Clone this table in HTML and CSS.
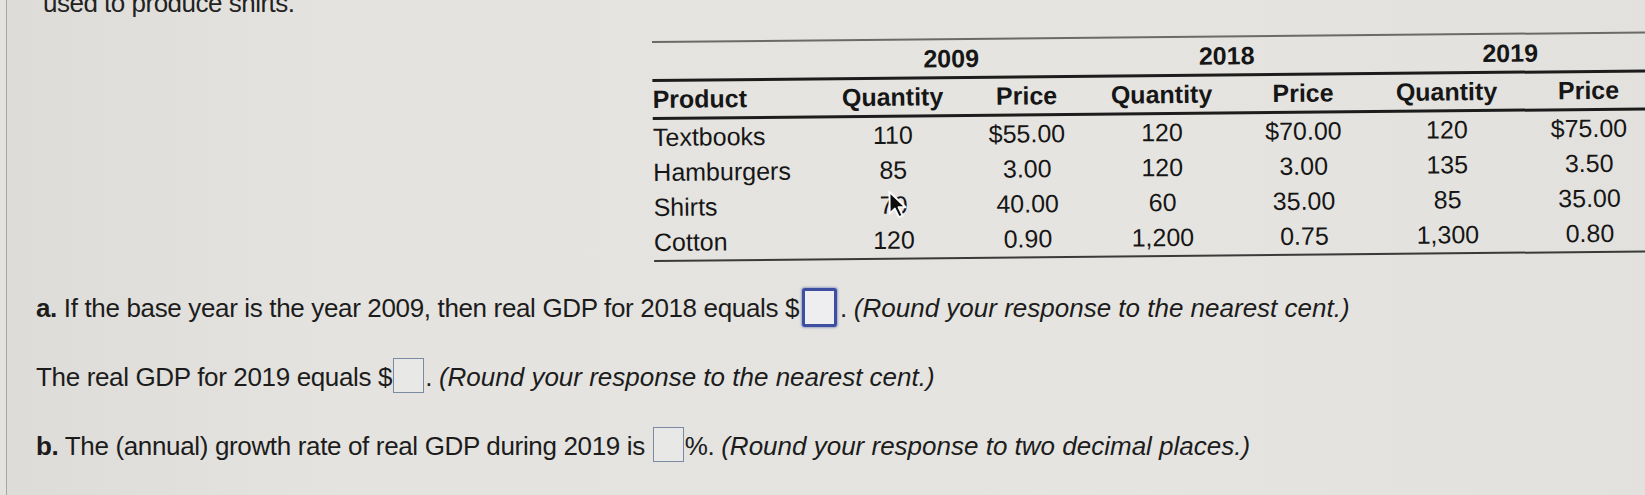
FILE: index.html
```html
<!DOCTYPE html>
<html lang="en">
<head>
<meta charset="utf-8">
<title>Real GDP</title>
<link rel="stylesheet" href="styles.css">
</head>
<body>
<div class="page">
  <p class="intro">used to produce shirts.</p>

  <div class="table">
    <div class="row years">
      <div class="cell"></div>
      <div class="cell year">2009</div>
      <div class="cell year">2018</div>
      <div class="cell year">2019</div>
    </div>
    <div class="row heads">
      <div class="cell prod">Product</div>
      <div class="cell">Quantity</div>
      <div class="cell">Price</div>
      <div class="cell">Quantity</div>
      <div class="cell">Price</div>
      <div class="cell">Quantity</div>
      <div class="cell">Price</div>
    </div>
    <div class="body">
      <div class="row data">
        <div class="cell prod">Textbooks</div>
        <div class="cell">110</div>
        <div class="cell">$55.00</div>
        <div class="cell">120</div>
        <div class="cell">$70.00</div>
        <div class="cell">120</div>
        <div class="cell">$75.00</div>
      </div>
      <div class="row data">
        <div class="cell prod">Hamburgers</div>
        <div class="cell">85</div>
        <div class="cell">3.00</div>
        <div class="cell">120</div>
        <div class="cell">3.00</div>
        <div class="cell">135</div>
        <div class="cell">3.50</div>
      </div>
      <div class="row data">
        <div class="cell prod">Shirts</div>
        <div class="cell has-cursor">70
          <svg class="cursor" width="22" height="30" viewBox="0 0 22 30" aria-hidden="true">
            <path d="M2 2 L2 24 L7.2 19 L11.2 27.6 L15 26 L11 17.6 L18 17.6 Z" fill="#0d0d0d" stroke="#fafafa" stroke-width="2" stroke-linejoin="round"/>
          </svg>
        </div>
        <div class="cell">40.00</div>
        <div class="cell">60</div>
        <div class="cell">35.00</div>
        <div class="cell">85</div>
        <div class="cell">35.00</div>
      </div>
      <div class="row data">
        <div class="cell prod">Cotton</div>
        <div class="cell">120</div>
        <div class="cell">0.90</div>
        <div class="cell">1,200</div>
        <div class="cell">0.75</div>
        <div class="cell">1,300</div>
        <div class="cell">0.80</div>
      </div>
    </div>
  </div>

  <div class="questions">
    <p class="q"><b>a.</b> If the base year is the year 2009, then real GDP for 2018 equals $<span class="box focus"></span>. <i>(Round your response to the nearest cent.)</i></p>
    <p class="q">The real GDP for 2019 equals $<span class="box"></span>. <i>(Round your response to the nearest cent.)</i></p>
    <p class="q"><b>b.</b> The (annual) growth rate of real GDP during 2019 is <span class="box"></span>%. <i>(Round your response to two decimal places.)</i></p>
  </div>
</div>
</body>
</html>
```

FILE: styles.css
```css
html, body {
  margin: 0;
  padding: 0;
}

body {
  background: #e3e2de;
  font-family: "Liberation Sans", Arial, sans-serif;
  color: #1e1e1e;
  overflow: hidden;
  width: 1645px;
  height: 495px;
}

.page {
  display: flow-root;
  height: 495px;
  margin-left: 6px;
  border-left: 1px solid #a8a6a1;
  background: linear-gradient(90deg, #dedcd8 0%, #e4e3df 20%, #e5e4e0 70%, #e2e1dd 100%);
}

.intro {
  margin: -12px 0 0 36px;
  font-size: 26px;
  line-height: 30px;
  letter-spacing: -0.5px;
  color: #222;
}

/* data table */
.table {
  margin: 23px 0 0 645px;
  width: 1007px;
  transform: rotate(-0.55deg);
  transform-origin: 0 0;
  font-size: 25px;
  color: #161616;
}

.row {
  display: grid;
  grid-template-columns: 172px 136px 132px 138px 145px 142px 142px;
  align-items: center;
}

.cell {
  text-align: center;
  white-space: nowrap;
}

.cell.prod {
  text-align: left;
  padding-left: 0;
}

.years {
  grid-template-columns: 172px 268px 283px 284px;
  height: 36px;
  border-top: 2px solid #6a6a68;
  border-bottom: 3px solid #1c1c1c;
  font-weight: bold;
  line-height: 36px;
}

.year {
  padding-right: 14px;
}

.heads {
  height: 35px;
  line-height: 35px;
  font-weight: bold;
  border-bottom: 3px solid #1c1c1c;
}

.body {
  border-bottom: 2px solid #3a3a3a;
}

.data {
  height: 35px;
  line-height: 35px;
}

.has-cursor {
  position: relative;
}

.cursor {
  position: absolute;
  left: 62px;
  top: 2px;
}

/* questions */
.questions {
  margin-top: 26px;
  padding-left: 29px;
  font-size: 26px;
  letter-spacing: -0.35px;
  color: #1c1c1c;
}

.q {
  margin: 0 0 29px 0;
  line-height: 40px;
  white-space: nowrap;
}

.q i {
  letter-spacing: 0;
}

.box {
  display: inline-block;
  width: 31px;
  height: 35px;
  margin: 0 1px;
  vertical-align: -7px;
  box-sizing: border-box;
  border: 1px solid #7d89a2;
  background: #e8e8e7;
}

.box.focus {
  width: 35px;
  height: 39px;
  margin: 0 3px;
  vertical-align: -10px;
  border: 3px solid #3e4ea0;
  border-radius: 3px;
  background: #eeeef1;
  box-shadow: 0 0 2px 1px rgba(70, 90, 170, 0.45);
}
```
